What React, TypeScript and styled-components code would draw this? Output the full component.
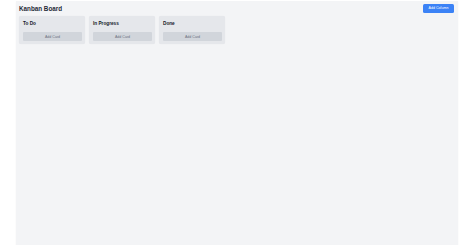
import React, { useState } from 'react';
import styled, { createGlobalStyle } from 'styled-components';

const GlobalStyle = createGlobalStyle`
  html, body {
    margin: 0;
    padding: 0;
    background: #ffffff;
    font-family: "Liberation Sans", Arial, sans-serif;
  }
`;

const Board = styled.div`
  margin: 1px 16px 0;
  height: 244px;
  box-sizing: border-box;
  padding: 2px 4px 0 3px;
  background-color: #f3f4f6;
  box-shadow: 0 1px 2px rgba(0, 0, 0, 0.04);
`;

const Header = styled.div`
  display: flex;
  justify-content: space-between;
  align-items: center;
  height: 10px;
`;

const Title = styled.h1`
  margin: 0;
  font-size: 6.3px;
  font-weight: 700;
  color: #1f2937;
`;

const PrimaryButton = styled.button`
  height: 9px;
  width: 31px;
  padding: 0;
  border: none;
  border-radius: 1.5px;
  background-color: #3b82f6;
  color: #ffffff;
  font-family: inherit;
  font-size: 3.6px;
  cursor: pointer;
`;

const Columns = styled.div`
  display: flex;
  gap: 4px;
  margin-top: 3px;
  align-items: flex-start;
`;

const Column = styled.div`
  width: 66px;
  box-sizing: border-box;
  padding: 4px 3px 3px 4px;
  background-color: #e5e7eb;
  border-radius: 2px;
  box-shadow: 0 0 1px rgba(0, 0, 0, 0.08);
`;

const ColumnTitle = styled.h2`
  margin: 0 0 5px;
  height: 7px;
  line-height: 7px;
  font-size: 4.7px;
  font-weight: 700;
  color: #111827;
`;

const AddCardButton = styled.button`
  display: block;
  width: 100%;
  height: 9px;
  padding: 0;
  border: none;
  border-radius: 1px;
  background-color: #d1d5db;
  color: #6b7280;
  font-family: inherit;
  font-size: 3.6px;
  cursor: pointer;
`;

interface ColumnData {
  id: number;
  title: string;
  cards: string[];
}

export default function App() {
  const [columns, setColumns] = useState<ColumnData[]>([
    { id: 1, title: 'To Do', cards: [] },
    { id: 2, title: 'In Progress', cards: [] },
    { id: 3, title: 'Done', cards: [] },
  ]);

  const addColumn = () => {
    setColumns(prev => [...prev, { id: Date.now(), title: 'New Column', cards: [] }]);
  };

  return (
    <>
      <GlobalStyle />
      <Board>
        <Header>
          <Title>Kanban Board</Title>
          <PrimaryButton onClick={addColumn}>Add Column</PrimaryButton>
        </Header>
        <Columns>
          {columns.map(col => (
            <Column key={col.id}>
              <ColumnTitle>{col.title}</ColumnTitle>
              <AddCardButton>Add Card</AddCardButton>
            </Column>
          ))}
        </Columns>
      </Board>
    </>
  );
}
